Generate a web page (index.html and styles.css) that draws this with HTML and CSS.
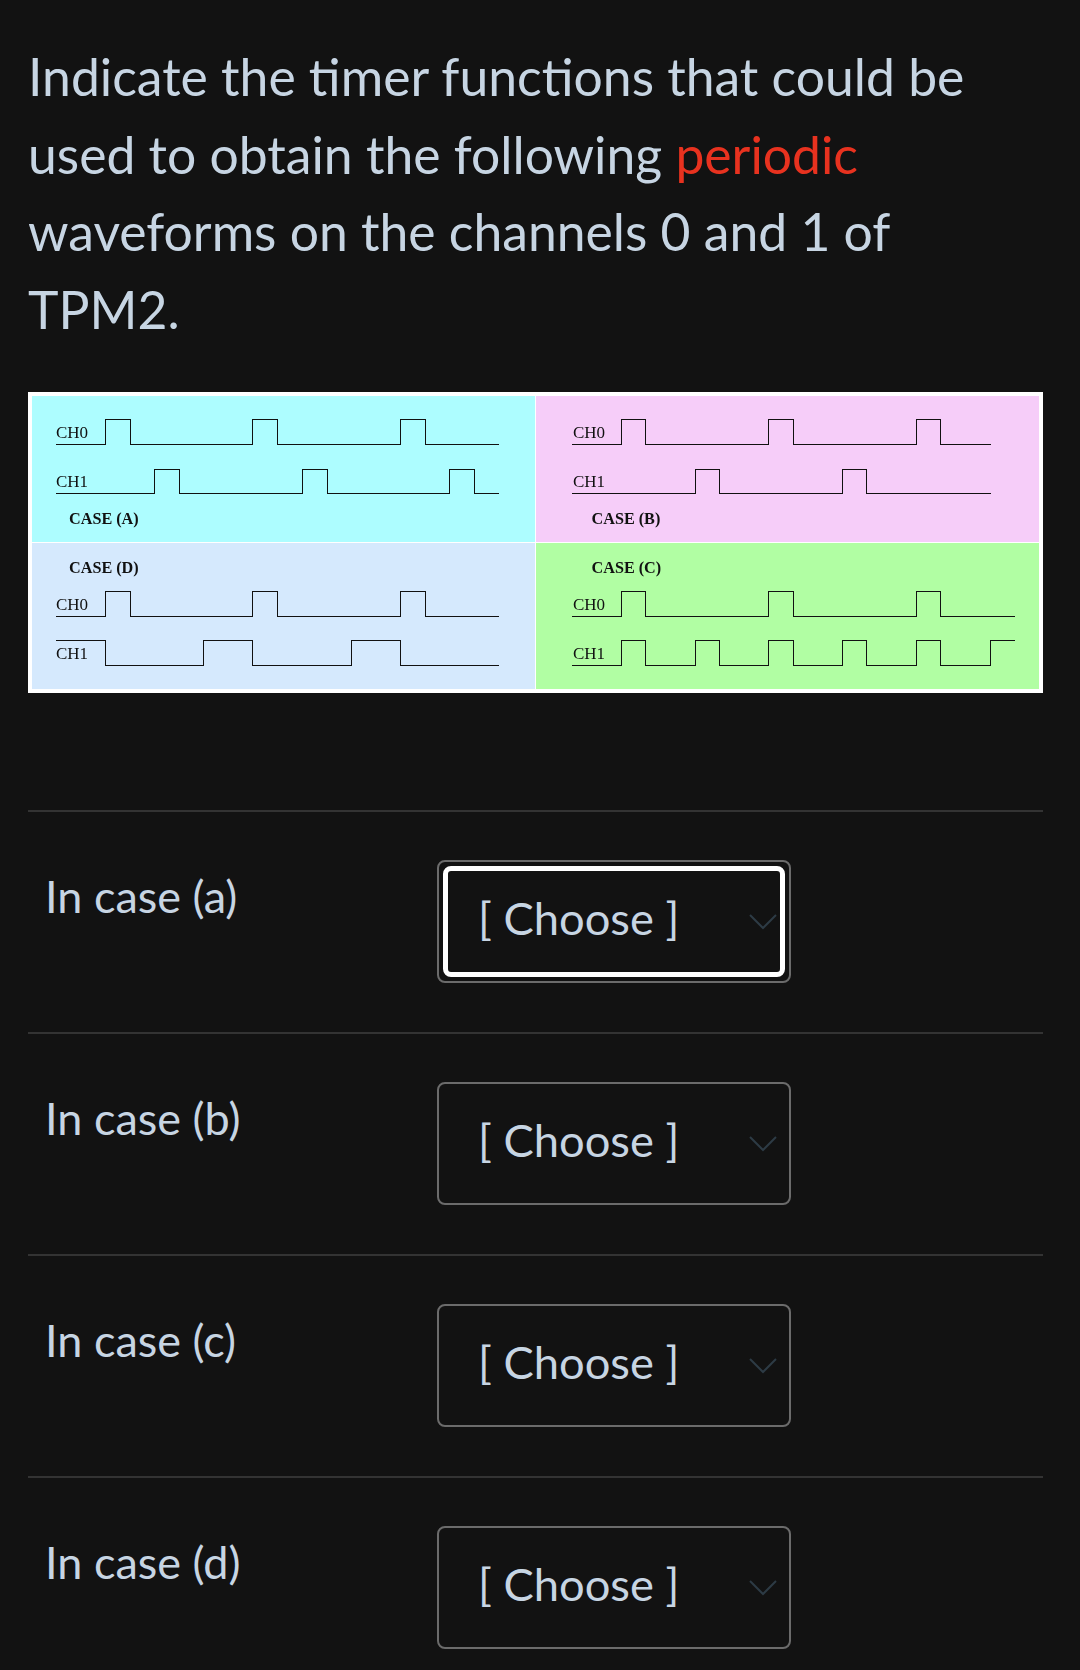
FILE: index.html
```html
<!DOCTYPE html>
<html lang="en">
<head>
  <meta charset="UTF-8">
  <meta name="viewport" content="width=device-width, initial-scale=1.0">
  <title>Timer waveforms question</title>
  <link rel="stylesheet" href="styles.css">
</head>
<body>
  <p class="question">Indicate the timer functions that could be used to obtain the following <span class="accent">periodic</span> waveforms on the channels 0 and 1 of TPM2.</p>

  <div class="figure">
    <svg class="panel panel-a" viewBox="32 396 503 146">
      <text class="ch" x="56" y="438">CH0</text>
      <path class="wave" d="M56 444H105V419H130V444H252.5V419H277V444H400V419H425V444H499"/>
      <text class="ch" x="56" y="487">CH1</text>
      <path class="wave" d="M56 493H154V469H179V493H302V469H327V493H449V469H474V493H499"/>
      <text class="case" x="69" y="524">CASE (A)</text>
    </svg>
    <svg class="panel panel-b" viewBox="536.5 396 503 146">
      <text class="ch" x="573.5" y="438">CH0</text>
      <path class="wave" d="M572 444H621.5V419H646V444H769V419H794V444H917V419H941V444H991"/>
      <text class="ch" x="573.5" y="487">CH1</text>
      <path class="wave" d="M572 493H696V469H720V493H843V469H867V493H991"/>
      <text class="case" x="592" y="524">CASE (B)</text>
    </svg>
    <svg class="panel panel-d" viewBox="32 543 503 146">
      <text class="case" x="69" y="573">CASE (D)</text>
      <text class="ch" x="56" y="610">CH0</text>
      <path class="wave" d="M56 616H105V591H130V616H252.5V591H277V616H400V591H425V616H499"/>
      <text class="ch" x="56" y="659">CH1</text>
      <path class="wave" d="M56 640H105V665H203.5V640H252.5V665H351V640H400V665H499"/>
    </svg>
    <svg class="panel panel-c" viewBox="536.5 543 503 146">
      <text class="case" x="592" y="573">CASE (C)</text>
      <text class="ch" x="573.5" y="610">CH0</text>
      <path class="wave" d="M572 616H621.5V591H646V616H769V591H794V616H917V591H941V616H1015.5"/>
      <text class="ch" x="573.5" y="659">CH1</text>
      <path class="wave" d="M572 665H621.5V640H646V665H696V640H720V665H769V640H794V665H843V640H867V665H917V640H941V665H991V640H1015.5"/>
    </svg>
  </div>

  <div class="answers">
    <div class="answer">
      <div class="answer-label">In case (a)</div>
      <div class="select is-focused">
        <span class="select-text">[ Choose ]</span>
        <svg class="chevron" viewBox="0 0 28 16"><path d="M1 1L14 14L27 1"/></svg>
      </div>
    </div>
    <div class="answer">
      <div class="answer-label">In case (b)</div>
      <div class="select">
        <span class="select-text">[ Choose ]</span>
        <svg class="chevron" viewBox="0 0 28 16"><path d="M1 1L14 14L27 1"/></svg>
      </div>
    </div>
    <div class="answer">
      <div class="answer-label">In case (c)</div>
      <div class="select">
        <span class="select-text">[ Choose ]</span>
        <svg class="chevron" viewBox="0 0 28 16"><path d="M1 1L14 14L27 1"/></svg>
      </div>
    </div>
    <div class="answer">
      <div class="answer-label">In case (d)</div>
      <div class="select">
        <span class="select-text">[ Choose ]</span>
        <svg class="chevron" viewBox="0 0 28 16"><path d="M1 1L14 14L27 1"/></svg>
      </div>
    </div>
  </div>
</body>
</html>
```

FILE: styles.css
```css
body {
  margin: 0;
  padding: 38px 37px 0 28px;
  height: 1670px;
  box-sizing: border-box;
  overflow: hidden;
  background-color: #121212;
  color: #c7d5e3;
  font-family: 'Lato', sans-serif;
}

.question {
  margin: 0;
  font-size: 51.65px;
  line-height: 77.5px;
  font-variant-ligatures: common-ligatures;
}

.accent {
  color: #e8321f;
}

.figure {
  display: grid;
  grid-template-columns: 503px 503px;
  grid-template-rows: 146px 146px;
  gap: 1px;
  width: 1007px;
  margin-top: 44px;
  border: 4px solid #fff;
  background-color: #fff;
}

/* the figure is a scaled image in the original, so it is a little soft */
.panel {
  display: block;
  width: 100%;
  height: 100%;
  filter: blur(0.35px);
}

.panel-a { background-color: #adfdff; }
.panel-b { background-color: #f6cdf9; }
.panel-c { background-color: #b1fea3; }
.panel-d { background-color: #d5e9fd; }

.wave {
  fill: none;
  stroke: #111;
  stroke-width: 1;
  shape-rendering: crispEdges;
}

.ch {
  font-family: 'Liberation Serif', serif;
  font-size: 17px;
  fill: #111;
}

.case {
  font-family: 'Liberation Serif', serif;
  font-size: 16.2px;
  font-weight: bold;
  fill: #111;
}

.answers {
  margin-top: 117px;
}

.answer {
  display: grid;
  grid-template-columns: 409px 354px;
  border-top: 2px solid #333;
  padding-top: 48px;
  height: 172px;
}

.answer-label {
  padding: 6px 0 0 17px;
  font-size: 45px;
  line-height: 60px;
}

.select {
  position: relative;
  display: flex;
  align-items: center;
  justify-content: space-between;
  box-sizing: border-box;
  width: 354px;
  height: 123px;
  padding: 0 12px 0 39px;
  border: 2px solid #6b6b6b;
  border-radius: 8px;
  font-size: 45.3px;
}

.select-text {
  padding-bottom: 9px;
}

/* focus ring sits inside the border */
.select.is-focused::before {
  content: "";
  position: absolute;
  inset: 4px;
  border: 5px solid #fff;
  border-radius: 8px;
}

.chevron {
  width: 28px;
  height: 16px;
  fill: none;
  stroke: #2d3b45;
  stroke-width: 2;
}
```
